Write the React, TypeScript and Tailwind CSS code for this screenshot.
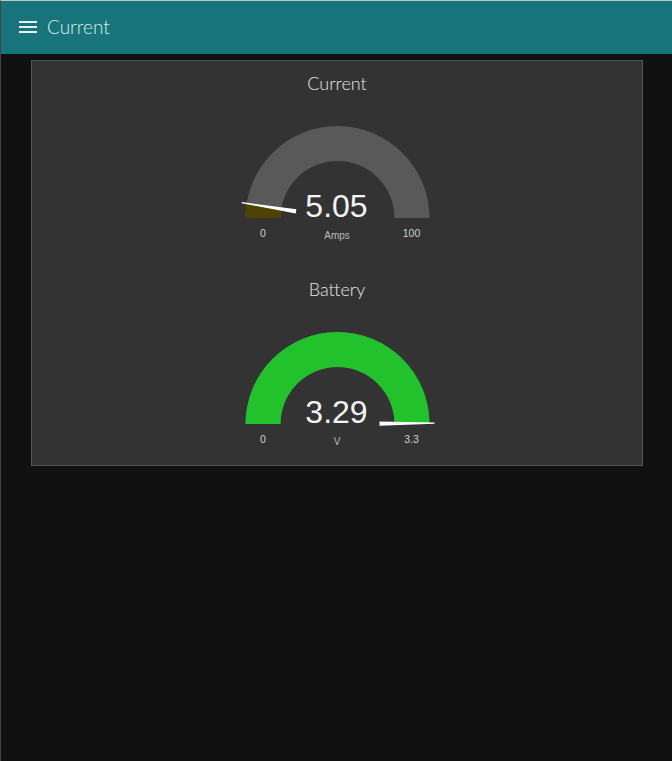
import React from "react"

type GaugeProps = {
  title: string
  value: number
  min: number
  max: number
  units: string
  label: string
  color: string
}

const CX = 130.5
const CY = 118
const R_OUT = 92
const R_IN = 57

// angle a: 0 = left end, PI = right end
function pt(r: number, a: number) {
  return [CX - r * Math.cos(a), CY - r * Math.sin(a)]
}

function sector(a: number) {
  const [x1, y1] = pt(R_OUT, 0)
  const [x2, y2] = pt(R_OUT, a)
  const [x3, y3] = pt(R_IN, a)
  const [x4, y4] = pt(R_IN, 0)
  return `M ${x1} ${y1} A ${R_OUT} ${R_OUT} 0 0 1 ${x2} ${y2} L ${x3} ${y3} A ${R_IN} ${R_IN} 0 0 0 ${x4} ${y4} Z`
}

function needle(a: number) {
  const [bx, by] = pt(42, a)
  const [tx, ty] = pt(97, a)
  // perpendicular
  const px = Math.sin(a)
  const py = -Math.cos(a)
  const w0 = 2.2
  const w1 = 0.6
  return [
    [bx + px * w0, by + py * w0],
    [tx + px * w1, ty + py * w1],
    [tx - px * w1, ty - py * w1],
    [bx - px * w0, by - py * w0],
  ]
    .map((p) => p.join(","))
    .join(" ")
}

function Gauge({ title, value, min, max, units, label, color }: GaugeProps) {
  const f = Math.min(1, Math.max(0, (value - min) / (max - min)))
  const a = Math.PI * f

  return (
    <div className="flex flex-col items-center">
      <div className="h-[34px] flex items-center text-[18px] font-light text-[#e6e6e6] font-['Lato',sans-serif]">
        {title}
      </div>
      <svg width="260" height="150" viewBox="0 0 260 150">
        <path d={sector(Math.PI)} fill="#595959" />
        <path d={sector(a)} fill={color} />
        <text
          x={CX - 1}
          y={CY - 1}
          textAnchor="middle"
          fill="#f4f4f4"
          fontSize="32"
          fontFamily="'Liberation Sans', Arial, sans-serif"
        >
          {label}
        </text>
        <polygon points={needle(a)} fill="#ffffff" />
        <text
          x={CX - 0.5}
          y={CY + 21}
          textAnchor="middle"
          fill="#bdbdbd"
          fontSize="10"
          fontFamily="'Liberation Sans', Arial, sans-serif"
        >
          {units}
        </text>
        <text
          x={CX - 74.5}
          y={CY + 18.5}
          textAnchor="middle"
          fill="#d0d0d0"
          fontSize="10.5"
          fontFamily="'Liberation Sans', Arial, sans-serif"
        >
          {min}
        </text>
        <text
          x={CX + 74}
          y={CY + 18.5}
          textAnchor="middle"
          fill="#d0d0d0"
          fontSize="10.5"
          fontFamily="'Liberation Sans', Arial, sans-serif"
        >
          {max}
        </text>
      </svg>
    </div>
  )
}

export default function App() {
  return (
    <div className="w-[672px] h-[761px] bg-[#111111] border-t border-t-[#c4c4c4] border-l border-l-[#444444] flex flex-col overflow-hidden font-['Lato',sans-serif]">
      {/* TOOLBAR */}
      <header className="h-[53px] shrink-0 bg-[#16747a] flex items-center pl-[18px] gap-[10px]">
        <svg width="18" height="14" viewBox="0 0 18 14" className="mb-[1px]">
          <rect x="0" y="1" width="18" height="2" fill="#e6f2f2" />
          <rect x="0" y="6" width="18" height="2" fill="#e6f2f2" />
          <rect x="0" y="11" width="18" height="2" fill="#e6f2f2" />
        </svg>
        <span className="text-[19px] leading-none mb-[3px] text-[#dcefef] font-light">Current</span>
      </header>

      {/* GROUP CARD */}
      <div className="ml-[30px] mt-[6px] w-[612px] bg-[#333333] border border-[#555555] pt-[5px] pb-[9px] flex flex-col gap-[22px]">
        <Gauge title="Current" value={5.05} min={0} max={100} units="Amps" label="5.05" color="#4e4300" />
        <Gauge title="Battery" value={3.29} min={0} max={3.3} units="V" label="3.29" color="#21c22b" />
      </div>
    </div>
  )
}
